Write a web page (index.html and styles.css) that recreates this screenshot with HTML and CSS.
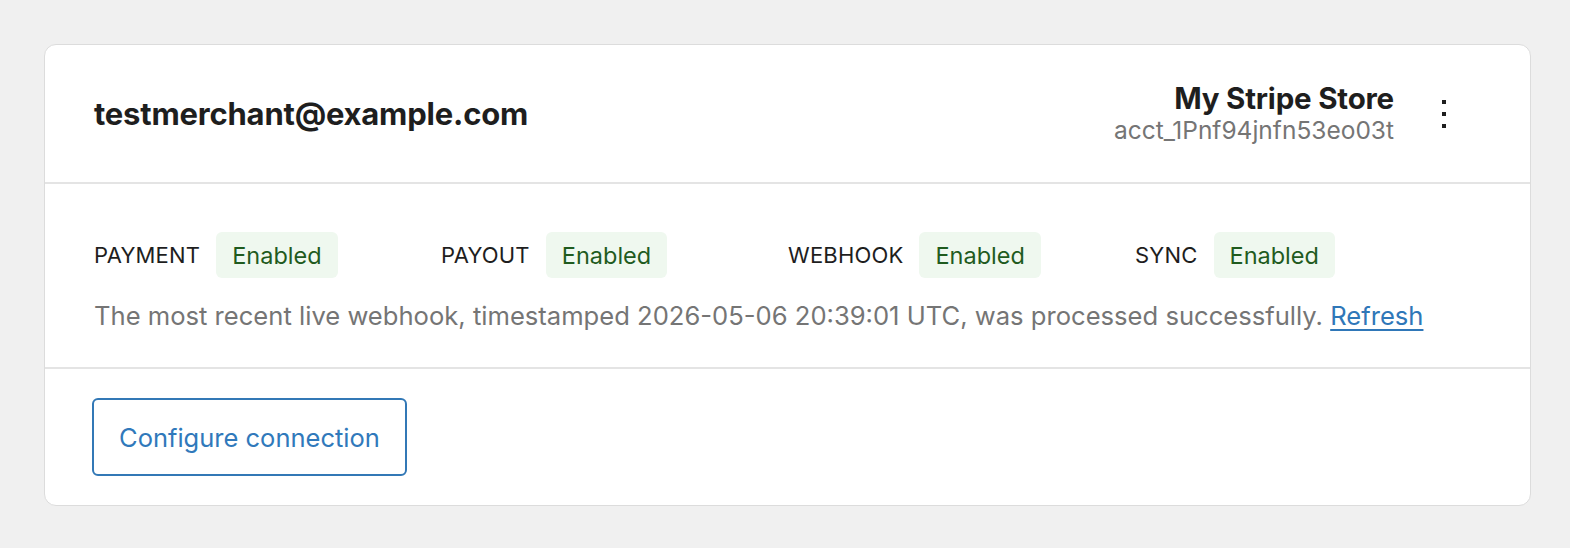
FILE: index.html
```html
<!DOCTYPE html>
<html lang="en">
<head>
<meta charset="utf-8">
<title>Stripe account</title>
<link rel="stylesheet" href="styles.css">
</head>
<body>
<div class="card">
  <div class="card-header">
    <div class="email">testmerchant@example.com</div>
    <div class="account-wrap">
      <div class="account">
        <div class="account-name">My Stripe Store</div>
        <div class="account-id">acct_1Pnf94jnfn53eo03t</div>
      </div>
      <button class="kebab" aria-label="More actions">
        <svg width="24" height="32" viewBox="0 0 24 32"><rect x="10" y="2" width="4" height="4" fill="#1e1e1e"/><rect x="10" y="14" width="4" height="4" fill="#1e1e1e"/><rect x="10" y="26" width="4" height="4" fill="#1e1e1e"/></svg>
      </button>
    </div>
  </div>
  <div class="card-body">
    <div class="statuses">
      <div class="status"><span class="label">PAYMENT</span><span class="badge">Enabled</span></div>
      <div class="status"><span class="label">PAYOUT</span><span class="badge">Enabled</span></div>
      <div class="status"><span class="label">WEBHOOK</span><span class="badge">Enabled</span></div>
      <div class="status"><span class="label">SYNC</span><span class="badge">Enabled</span></div>
    </div>
    <p class="note">The most recent live webhook, timestamped 2026-05-06 20:39:01 UTC, was processed successfully. <a href="#" class="link">Refresh</a></p>
  </div>
  <div class="card-footer">
    <button class="btn-outline">Configure connection</button>
  </div>
</div>
</body>
</html>
```

FILE: styles.css
```css
* { box-sizing: border-box; }
html, body { margin: 0; }
body {
  background: #f0f0f0;
  padding: 44px 39px 44px 44px;
  font-family: Inter, "Noto Sans", "Liberation Sans", sans-serif;
  color: #1e1e1e;
}
.card {
  background: #fff;
  border: 1px solid #dcdcdc;
  border-radius: 12px;
}
.card-header {
  display: flex;
  align-items: center;
  justify-content: space-between;
  height: 139px;
  padding: 0 62px 0 49px;
  border-bottom: 2px solid #e4e4e4;
}
.email {
  font-size: 31px;
  font-weight: 700;
  letter-spacing: -0.2px;
}
.account-wrap {
  display: flex;
  align-items: center;
  gap: 26px;
}
.account {
  text-align: right;
}
.account-name {
  font-size: 29.5px;
  font-weight: 700;
  line-height: 32px;
  letter-spacing: -0.2px;
}
.account-id {
  font-size: 24.5px;
  line-height: 32px;
  color: #757575;
}
.kebab {
  width: 48px;
  height: 48px;
  padding: 0;
  border: 0;
  background: none;
  display: flex;
  align-items: center;
  justify-content: center;
}
.card-body {
  padding: 48px 48px 31px 49px;
  border-bottom: 2px solid #e4e4e4;
}
.statuses {
  display: grid;
  grid-template-columns: repeat(4, 1fr);
}
.status {
  display: flex;
  align-items: center;
  gap: 16px;
}
.label {
  font-size: 22px;
  letter-spacing: 0.2px;
}
.badge {
  display: inline-flex;
  align-items: center;
  height: 46px;
  padding: 0 16px;
  border-radius: 6px;
  background: #eff8ef;
  color: #1f5b1e;
  font-size: 23.5px;
}
.note {
  margin: 18px 0 0;
  font-size: 25.6px;
  line-height: 40px;
  color: #757575;
}
.link {
  color: #2f77b8;
  text-decoration: underline;
  text-underline-offset: 4px;
}
.card-footer {
  padding: 29px 48px 29px 47px;
}
.btn-outline {
  display: block;
  height: 78px;
  padding: 0 25px;
  font-family: inherit;
  font-size: 25.5px;
  color: #3079bb;
  background: #fff;
  border: 2.5px solid #3278b6;
  border-radius: 6px;
}
```
